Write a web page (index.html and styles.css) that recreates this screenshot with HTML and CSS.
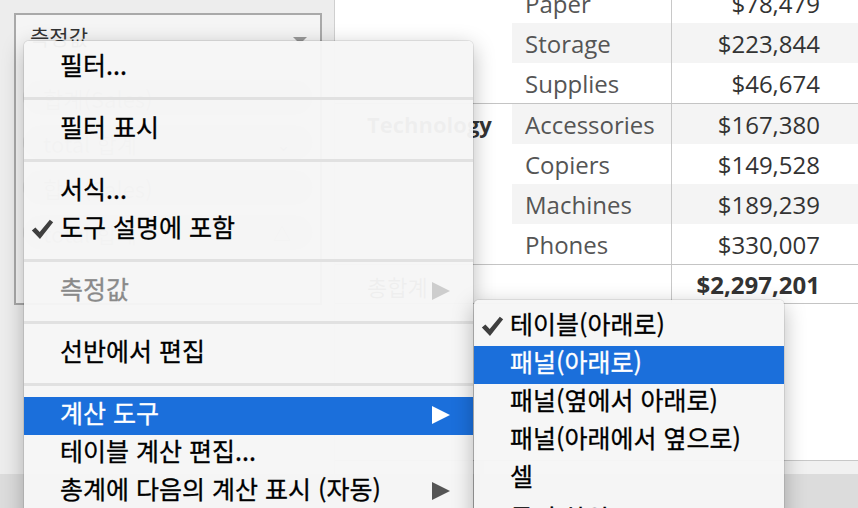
FILE: index.html
```html
<!DOCTYPE html>
<html lang="ko">
<head>
  <meta charset="UTF-8">
  <meta name="viewport" content="width=device-width, initial-scale=1.0">
  <title>측정값 메뉴</title>
  <link rel="stylesheet" href="styles.css">
</head>
<body>

<div class="app">
  <div class="workspace">
    <div class="side">
      <div class="card">
        <div class="card-head">
          <span>측정값</span>
          <span class="caret"></span>
        </div>
        <div class="pill">합계(Sales)</div>
        <div class="pill">total 합계 <span class="pill-icon">⌄</span></div>
        <div class="pill">합계(Sales)</div>
        <div class="pill">total 합계 <span class="pill-icon">△</span></div>
      </div>
    </div>

    <div class="view">
      <div class="crosstab">
        <div class="group">
          <div class="cat"></div>
          <div class="rows">
            <div class="row"><span class="sub">Paper</span><span class="val">$78,479</span></div>
            <div class="row alt"><span class="sub">Storage</span><span class="val">$223,844</span></div>
            <div class="row"><span class="sub">Supplies</span><span class="val">$46,674</span></div>
          </div>
        </div>
        <div class="group">
          <div class="cat">Technology</div>
          <div class="rows">
            <div class="row alt"><span class="sub">Accessories</span><span class="val">$167,380</span></div>
            <div class="row"><span class="sub">Copiers</span><span class="val">$149,528</span></div>
            <div class="row alt"><span class="sub">Machines</span><span class="val">$189,239</span></div>
            <div class="row"><span class="sub">Phones</span><span class="val">$330,007</span></div>
          </div>
        </div>
        <div class="group total">
          <div class="cat">총합계</div>
          <div class="rows">
            <div class="row"><span class="sub"></span><span class="val">$2,297,201</span></div>
          </div>
        </div>
      </div>
      <div class="blank"></div>
      <div class="hscroll"></div>
    </div>
  </div>
  <div class="tabbar"></div>
</div>

<!-- context menu -->
<div class="menu main-menu">
  <div class="item"><span class="mark"></span><span class="label">필터...</span></div>
  <div class="sep"></div>
  <div class="item"><span class="mark"></span><span class="label">필터 표시</span></div>
  <div class="sep"></div>
  <div class="item"><span class="mark"></span><span class="label">서식...</span></div>
  <div class="item">
    <span class="mark"><svg width="23" height="21" viewBox="0 0 22 20"><path d="M0.8 11 L4.2 8.1 L8.3 12.4 L18 0.6 L21.2 3 L8.6 19.2 Z" fill="#3f3f3f"/></svg></span>
    <span class="label">도구 설명에 포함</span>
  </div>
  <div class="sep"></div>
  <div class="item disabled">
    <span class="mark"></span><span class="label">측정값</span>
    <svg class="arrow" width="18" height="18" viewBox="0 0 18 18"><polygon points="0,0 18,9 0,18"/></svg>
  </div>
  <div class="sep"></div>
  <div class="item"><span class="mark"></span><span class="label">선반에서 편집</span></div>
  <div class="sep"></div>
  <div class="item active">
    <span class="mark"></span><span class="label">계산 도구</span>
    <svg class="arrow" width="18" height="18" viewBox="0 0 18 18"><polygon points="0,0 18,9 0,18"/></svg>
  </div>
  <div class="item"><span class="mark"></span><span class="label">테이블 계산 편집...</span></div>
  <div class="item">
    <span class="mark"></span><span class="label">총계에 다음의 계산 표시 (자동)</span>
    <svg class="arrow" width="18" height="18" viewBox="0 0 18 18"><polygon points="0,0 18,9 0,18"/></svg>
  </div>
</div>

<div class="menu sub-menu">
  <div class="item">
    <span class="mark"><svg width="23" height="21" viewBox="0 0 22 20"><path d="M0.8 11 L4.2 8.1 L8.3 12.4 L18 0.6 L21.2 3 L8.6 19.2 Z" fill="#3f3f3f"/></svg></span>
    <span class="label">테이블(아래로)</span>
  </div>
  <div class="item active"><span class="mark"></span><span class="label">패널(아래로)</span></div>
  <div class="item"><span class="mark"></span><span class="label">패널(옆에서 아래로)</span></div>
  <div class="item"><span class="mark"></span><span class="label">패널(아래에서 옆으로)</span></div>
  <div class="item"><span class="mark"></span><span class="label">셀</span></div>
  <div class="item last"><span class="mark"></span><span class="label">특정 차원</span></div>
</div>

</body>
</html>
```

FILE: styles.css
```css
body {
  margin: 0;
  width: 858px;
  height: 508px;
  overflow: hidden;
  font-family: "Noto Sans CJK KR", "Noto Sans", sans-serif;
  background-color: #fff;
}
.app {
  display: flex;
  flex-direction: column;
  height: 508px;
}
.workspace {
  display: flex;
  height: 474px;
}

/* left shelf */
.side {
  width: 335px;
  box-sizing: border-box;
  background-color: #ededed;
  border-right: 1px solid #cfcfcf;
  padding: 13px 0 0 14px;
}
.card {
  width: 308px;
  height: 292px;
  box-sizing: border-box;
  border: 2px solid #a9a9a9;
  background-color: #f5f5f5;
  padding: 0 7px;
}
.card-head {
  display: flex;
  justify-content: space-between;
  align-items: center;
  height: 42px;
  padding: 0 6px 0 7px;
  font-size: 21px;
  color: #333;
}
.caret {
  width: 0;
  height: 0;
  margin-top: 8px;
  border-left: 7px solid transparent;
  border-right: 7px solid transparent;
  border-top: 7px solid #999;
}
.pill {
  display: flex;
  align-items: center;
  height: 35px;
  margin-top: 10px;
  padding: 0 22px 0 20px;
  border-radius: 18px;
  background-color: #e6e6e6;
  color: #999;
  font-size: 22px;
}
.card-head + .pill {
  margin-top: 23px;
}
.pill-icon {
  margin-left: auto;
  font-size: 18px;
}

/* crosstab */
.view {
  flex: 1;
  display: flex;
  flex-direction: column;
  font-family: "Open Sans", "Noto Sans CJK KR", sans-serif;
  font-size: 24px;
}
.crosstab {
  margin-top: -17px;
}
.group {
  display: flex;
}
.group + .group {
  border-top: 1px solid #c4c4c4;
}
.cat {
  width: 177px;
  box-sizing: border-box;
  padding: 5px 0 0 32px;
  font-size: 22px;
  font-weight: bold;
  color: #333;
}
.rows {
  flex: 1;
}
.row {
  display: flex;
  height: 40px;
  align-items: center;
}
.row.alt {
  background-color: #f4f4f4;
}
.sub {
  width: 159px;
  box-sizing: border-box;
  padding-left: 13px;
  color: #555;
}
.val {
  flex: 1;
  align-self: stretch;
  display: flex;
  align-items: center;
  justify-content: flex-end;
  padding-right: 38px;
  border-left: 1px solid #c8c8c8;
  color: #333;
}
.total {
  border-bottom: 1px solid #c4c4c4;
}
.total .row {
  height: 38px;
}
.total .cat {
  font-weight: normal;
}
.total .val {
  font-weight: bold;
}
.blank {
  flex: 1;
}
.hscroll {
  height: 13px;
  border-top: 1px solid #c8c8c8;
  background-color: #f1f1f1;
}
.tabbar {
  flex: 1;
  background-color: #dcdcdc;
}

/* menus */
.menu {
  position: absolute;
  padding-top: 8px;
  background-color: rgba(246, 246, 246, 0.965);
  border-radius: 5px 5px 0 0;
  box-shadow: 0 0 0 1px rgba(0, 0, 0, 0.08), 0 6px 22px rgba(0, 0, 0, 0.28);
  font-size: 25px;
  color: #000;
}
.main-menu {
  left: 24px;
  top: 41px;
  width: 449px;
  height: 480px;
}
.sub-menu {
  left: 474px;
  top: 300px;
  width: 310px;
  height: 240px;
}
.item {
  display: flex;
  align-items: center;
  height: 38px;
  box-sizing: border-box;
  padding-bottom: 8px;
  white-space: nowrap;
  -webkit-text-stroke: 0.3px currentColor;
}
.item.last {
  padding-top: 8px;
}
.mark {
  width: 36px;
  display: flex;
  justify-content: center;
  padding-top: 6px;
}
.label {
  flex: 1;
}
.arrow {
  margin-right: 23px;
  margin-top: 6px;
  fill: #555;
}
.item.active {
  background-color: #1b6fdb;
  color: #fff;
}
.item.active .arrow {
  fill: #fff;
}
.item.disabled {
  color: #8a8a8a;
}
.item.disabled .arrow {
  fill: #cdcdcd;
}
.sep {
  height: 3px;
  margin: 10px 0 11px;
  background-color: #e1e1e1;
}
```
